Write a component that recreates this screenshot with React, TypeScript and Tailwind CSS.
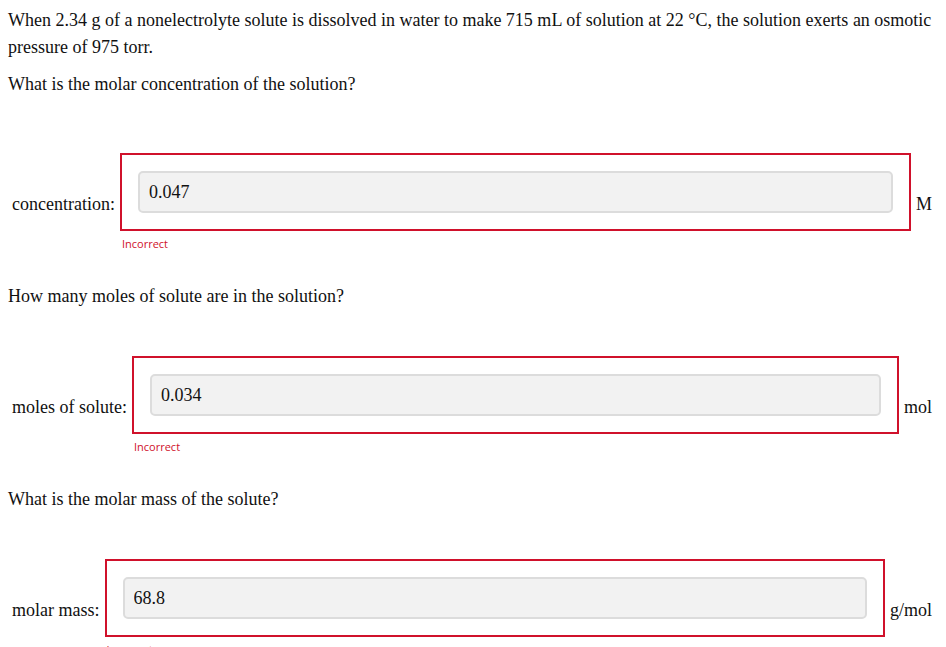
const questions = [
  {
    prompt: "What is the molar concentration of the solution?",
    label: "concentration:",
    value: "0.047",
    unit: "M",
  },
  {
    prompt: "How many moles of solute are in the solution?",
    label: "moles of solute:",
    value: "0.034",
    unit: "mol",
  },
  {
    prompt: "What is the molar mass of the solute?",
    label: "molar mass:",
    value: "68.8",
    unit: "g/mol",
  },
];

function AnswerRow({ label, value, unit }: { label: string; value: string; unit: string }) {
  return (
    <div className="flex items-start gap-[5px] pl-[4px] pr-[6px]">
      <span className="mt-[38px] whitespace-nowrap">{label}</span>
      <div className="flex flex-1 flex-col">
        <div className="border-2 border-[#d0112b] p-4">
          <input
            readOnly
            value={value}
            className="block h-[42px] w-full rounded-[5px] border-2 border-[#dcdcdc] bg-[#f2f2f2] px-[9px] text-[#111] outline-none"
            style={{ font: "inherit" }}
          />
        </div>
        {/* feedback */}
        <p className="ml-[2px] mt-[5px] font-['Open_Sans',sans-serif] text-[11px] leading-[15px] text-[#d0112b]">
          Incorrect
        </p>
      </div>
      <span className="mt-[38px] whitespace-nowrap">{unit}</span>
    </div>
  );
}

export default function App() {
  return (
    <div className="h-[647px] overflow-hidden bg-white px-2 pt-[7px] font-['Liberation_Serif','Times_New_Roman',serif] text-[18px] leading-[27px] text-[#111]">
      <p>
        When 2.34 g of a nonelectrolyte solute is dissolved in water to make 715 mL of solution at 22 °C,
        the solution exerts an osmotic pressure of 975 torr.
      </p>

      {questions.map((q, i) => (
        <section key={q.label}>
          <p className={i === 0 ? "mt-[10px] mb-[55px]" : "mt-[32px] mb-[46px]"}>{q.prompt}</p>
          <AnswerRow label={q.label} value={q.value} unit={q.unit} />
        </section>
      ))}
    </div>
  );
}
